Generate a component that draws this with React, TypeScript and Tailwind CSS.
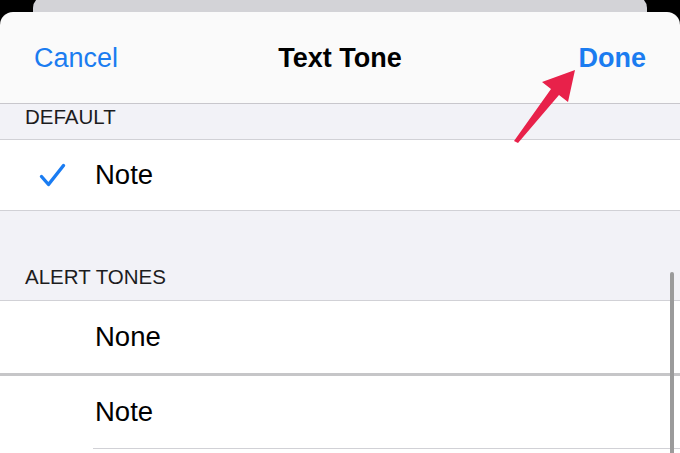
import React from "react";

function Check() {
  return (
    <svg width="27" height="25" viewBox="0 0 27 25" fill="none">
      <path
        d="M2.5 13.5 L9.5 21.5 L24.5 2.5"
        stroke="#1a7cf2"
        strokeWidth="3.4"
        strokeLinecap="round"
        strokeLinejoin="round"
      />
    </svg>
  );
}

export default function App() {
  return (
    <div
      className="relative w-[680px] h-[453px] overflow-hidden bg-black"
      style={{ fontFamily: '"Liberation Sans", Arial, sans-serif' }}
    >
      {/* stacked sheet behind */}
      <div className="mx-[33px] mt-[-4px] h-[16px] rounded-t-[12px] bg-[#d3d3d7]" />

      {/* main sheet */}
      <div className="flex flex-col rounded-t-[13px] bg-[#fafafa] h-[441px]">
        <div className="grid h-[92px] grid-cols-[1fr_auto_1fr] items-center border-b border-[#c8c7cc] px-[34px] pt-[2px]">
          <span className="justify-self-start text-[27px] text-[#1b7cf0]">Cancel</span>
          <span className="text-[27px] font-bold text-black">Text Tone</span>
          <span className="justify-self-end text-[27px] font-bold text-[#1b7cf0]">Done</span>
        </div>

        <div className="flex h-[35px] items-start bg-[#f2f2f7] pl-[25px] pt-[0px]">
          <span className="text-[20.5px] leading-[26px] text-[#1c1c1e]">DEFAULT</span>
        </div>

        <div className="flex h-[72px] items-center border-y border-[#d1d1d6] bg-white">
          <div className="flex w-[95px] justify-start pl-[39px]">
            <Check />
          </div>
          <span className="text-[27.5px] text-black">Note</span>
        </div>

        <div className="flex h-[89px] items-end bg-[#f2f2f7] pb-[10px] pl-[25px]">
          <span className="text-[20.5px] leading-[26px] text-[#1c1c1e]">ALERT TONES</span>
        </div>

        <div className="flex h-[73px] items-center border-t border-[#d1d1d6] bg-white pl-[95px]">
          <span className="text-[27.5px] text-black">None</span>
        </div>
        <div className="h-[3px] bg-[#c6c6c8]" />

        <div className="flex flex-1 flex-col bg-white">
          <div className="flex h-[72px] items-center pl-[95px]">
            <span className="text-[27.5px] text-black">Note</span>
          </div>
          <div className="ml-[93px] h-px bg-[#d1d1d6]" />
        </div>
      </div>

      {/* scroll indicator */}
      <div className="absolute left-[670px] top-[272px] h-[190px] w-[4px] rounded-full bg-[#9b9b9b]" />

      {/* annotation arrow */}
      <svg className="absolute inset-0" width="680" height="453" viewBox="0 0 680 453">
        <polygon
          points="575,70 568,102 559,95 518,143 514,141 551,89 542,82"
          fill="#e8214a"
        />
      </svg>
    </div>
  );
}
